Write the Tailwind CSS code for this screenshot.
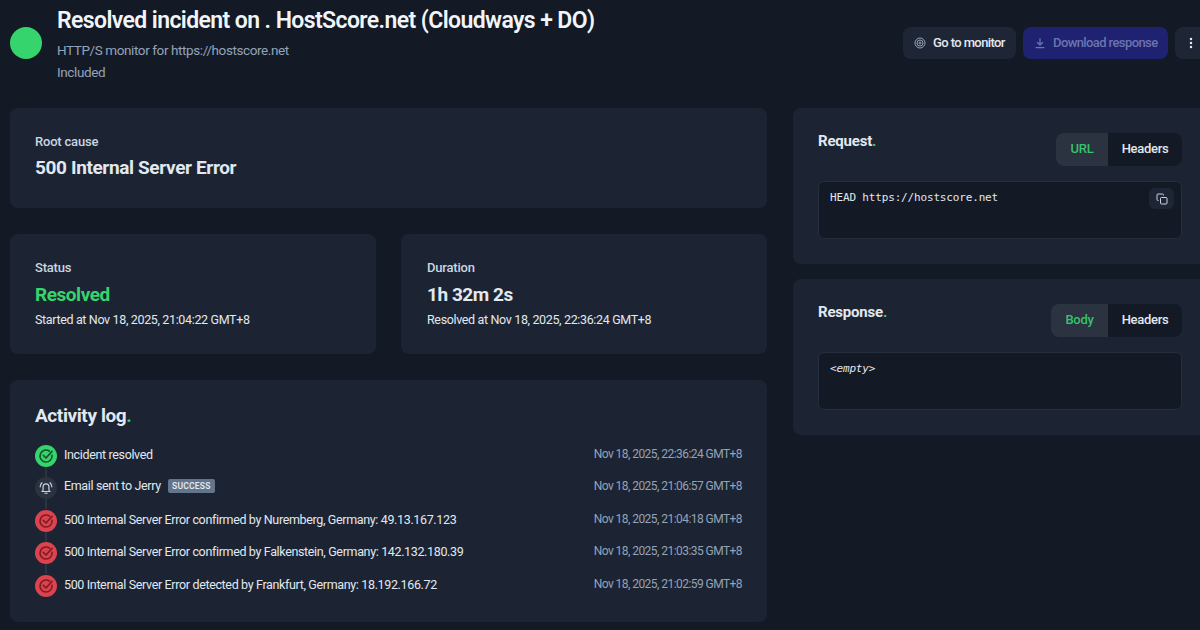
<!DOCTYPE html>
<html lang="en">
<head>
  <meta charset="UTF-8">
  <title>Resolved incident</title>
  <script src="https://cdn.jsdelivr.net/npm/@tailwindcss/browser@4"></script>
</head>
<body class="bg-[#131a26] text-[#e2e8f0] font-['Roboto',sans-serif] w-[1200px] h-[630px] overflow-hidden">
  <div class="w-[1207px] pl-[10px]">

    <!-- header -->
    <header class="h-[108px] flex items-start">
      <div class="w-8 h-8 rounded-full bg-[#36d46c] mt-[27px] shrink-0"></div>
      <div class="ml-[15px] flex-1">
        <h1 class="text-[23px] leading-[28px] mt-[7px] font-semibold tracking-[-0.6px] text-[#f1f5f9]">Resolved incident on . HostScore.net (Cloudways + DO)</h1>
        <p class="text-[13.5px] leading-[20px] mt-[5px] tracking-[-0.4px] text-[#94a3b8]">HTTP/S monitor for https://hostscore.net</p>
        <p class="text-[13.5px] leading-[20px] mt-[2px] tracking-[-0.4px] text-[#94a3b8]">Included</p>
      </div>
      <div class="flex gap-[7px] mt-[27px]">
        <button class="h-8 w-[113px] pl-[11px] rounded-lg bg-[#1e2534] flex items-center gap-[7px] text-[13px] font-medium tracking-[-0.6px] text-[#e2e8f0]">
          <svg class="w-3 h-3 text-[#94a3b8]" viewBox="0 0 24 24" fill="none" stroke="currentColor" stroke-width="2"><circle cx="12" cy="12" r="10"/><circle cx="12" cy="12" r="6"/><circle cx="12" cy="12" r="2"/></svg>
          Go to monitor
        </button>
        <button class="h-8 w-[145px] pl-[11px] rounded-lg bg-[#1e2270] flex items-center gap-[7px] text-[13px] font-medium tracking-[-0.6px] text-[#6b74b0]">
          <svg class="w-3 h-3" viewBox="0 0 24 24" fill="none" stroke="currentColor" stroke-width="2.5" stroke-linecap="round" stroke-linejoin="round"><path d="M12 3v12M7 11l5 5 5-5M4 21h16"/></svg>
          Download response
        </button>
        <button class="h-8 w-8 rounded-lg bg-[#1e2534] flex items-center justify-center text-[#e2e8f0]">
          <svg class="w-3 h-3" viewBox="0 0 24 24" fill="currentColor"><circle cx="12" cy="4" r="2.5"/><circle cx="12" cy="12" r="2.5"/><circle cx="12" cy="20" r="2.5"/></svg>
        </button>
      </div>
    </header>

    <div class="flex gap-[26px] items-start">
      <!-- left column -->
      <main class="w-[757px] shrink-0 flex flex-col gap-[26px]">
        <section class="h-[100px] rounded-lg bg-[#1c2433] px-[25px] pt-[25px]">
          <p class="text-[13px] leading-[18px] font-medium tracking-[-0.2px] text-[#cbd5e1]">Root cause</p>
          <p class="text-[19px] leading-[26px] mt-[4px] font-bold tracking-[-0.37px] text-[#e2e8f0]">500 Internal Server Error</p>
        </section>

        <div class="grid grid-cols-2 gap-[25px]">
          <section class="h-[120px] rounded-lg bg-[#1c2433] px-[25px] pt-[25px]">
            <p class="text-[13px] leading-[18px] font-medium tracking-[-0.2px] text-[#cbd5e1]">Status</p>
            <p class="text-[19px] leading-[26px] mt-[5px] font-bold tracking-[-0.45px] text-[#36d46c]">Resolved</p>
            <p class="text-[12.5px] leading-[18px] mt-[3px] tracking-[-0.35px] text-[#e2e8f0]">Started at Nov 18, 2025, 21:04:22 GMT+8</p>
          </section>
          <section class="h-[120px] rounded-lg bg-[#1c2433] pl-[26px] pr-[25px] pt-[25px]">
            <p class="text-[13px] leading-[18px] font-medium tracking-[-0.2px] text-[#cbd5e1]">Duration</p>
            <p class="text-[19px] leading-[26px] mt-[5px] font-bold tracking-[-0.45px] text-[#e2e8f0]">1h 32m 2s</p>
            <p class="text-[12.5px] leading-[18px] mt-[3px] tracking-[-0.35px] text-[#e2e8f0]">Resolved at Nov 18, 2025, 22:36:24 GMT+8</p>
          </section>
        </div>

        <section class="h-[242px] rounded-lg bg-[#1c2433] px-[25px] pt-[24px]">
          <h2 class="text-[19px] leading-[24px] font-bold tracking-[-0.4px] text-[#e2e8f0]">Activity log<span class="text-[#36d46c]">.</span></h2>
          <ul class="mt-[17px] flex flex-col text-[12.5px] leading-[18px] tracking-[-0.35px] text-[#e2e8f0]">
            <li class="h-[32px] flex items-start justify-between">
              <div class="flex items-start gap-[7px]">
                <span class="relative w-[22px] h-[22px] rounded-full bg-[#36d46c] flex items-center justify-center text-[#14532d]">
                  <svg class="w-4 h-4" viewBox="0 0 24 24" fill="none" stroke="currentColor" stroke-width="2.5" stroke-linecap="round" stroke-linejoin="round"><path d="M21 11a9 9 0 1 1-4-6.5"/><path d="M8 11l4 4 9-10"/></svg>
                  <span class="absolute top-full left-[10px] w-[2px] h-[10px] bg-[#2b3240]"></span>
                </span>
                <span class="pt-px">Incident resolved</span>
              </div>
              <span class="text-[#94a3b8] text-[12px] tracking-[-0.55px]">Nov 18, 2025, 22:36:24 GMT+8</span>
            </li>
            <li class="h-[33px] flex items-start justify-between">
              <div class="flex items-start gap-[7px]">
                <span class="relative w-[22px] h-[22px] rounded-full bg-[#2b3240] flex items-center justify-center text-[#cbd5e1]">
                  <svg class="w-[14px] h-[14px]" viewBox="0 0 24 24" fill="none" stroke="currentColor" stroke-width="2" stroke-linecap="round" stroke-linejoin="round"><path d="M7 10a5 5 0 0 1 10 0v5a3 3 0 0 0 2 3H5a3 3 0 0 0 2-3z"/><path d="M2 10c0-3 1-5 3-7M22 10c0-3-1-5-3-7M10 21h4"/></svg>
                  <span class="absolute top-full left-[10px] w-[2px] h-[10px] bg-[#2b3240]"></span>
                </span>
                <span>Email sent to Jerry</span>
                <span class="mt-[2px] h-[14px] w-[47px] text-center rounded-[2px] bg-[#64748b] text-[8.5px] font-semibold tracking-[0.2px] leading-[14px] text-[#e2e8f0]">SUCCESS</span>
              </div>
              <span class="text-[#94a3b8] text-[12px] tracking-[-0.55px]">Nov 18, 2025, 21:06:57 GMT+8</span>
            </li>
            <li class="h-[32px] flex items-start justify-between">
              <div class="flex items-start gap-[7px]">
                <span class="relative w-[22px] h-[22px] rounded-full bg-[#dc4250] flex items-center justify-center text-[#7f1d1d]">
                  <svg class="w-4 h-4" viewBox="0 0 24 24" fill="none" stroke="currentColor" stroke-width="2.5" stroke-linecap="round" stroke-linejoin="round"><path d="M21 11a9 9 0 1 1-4-6.5"/><path d="M8 11l4 4 9-10"/></svg>
                  <span class="absolute top-full left-[10px] w-[2px] h-[10px] bg-[#2b3240]"></span>
                </span>
                <span class="pt-px">500 Internal Server Error confirmed by Nuremberg, Germany: 49.13.167.123</span>
              </div>
              <span class="text-[#94a3b8] text-[12px] tracking-[-0.55px]">Nov 18, 2025, 21:04:18 GMT+8</span>
            </li>
            <li class="h-[33px] flex items-start justify-between">
              <div class="flex items-start gap-[7px]">
                <span class="relative w-[22px] h-[22px] rounded-full bg-[#dc4250] flex items-center justify-center text-[#7f1d1d]">
                  <svg class="w-4 h-4" viewBox="0 0 24 24" fill="none" stroke="currentColor" stroke-width="2.5" stroke-linecap="round" stroke-linejoin="round"><path d="M21 11a9 9 0 1 1-4-6.5"/><path d="M8 11l4 4 9-10"/></svg>
                  <span class="absolute top-full left-[10px] w-[2px] h-[10px] bg-[#2b3240]"></span>
                </span>
                <span class="pt-px">500 Internal Server Error confirmed by Falkenstein, Germany: 142.132.180.39</span>
              </div>
              <span class="text-[#94a3b8] text-[12px] tracking-[-0.55px]">Nov 18, 2025, 21:03:35 GMT+8</span>
            </li>
            <li class="h-[32px] flex items-start justify-between">
              <div class="flex items-start gap-[7px]">
                <span class="w-[22px] h-[22px] rounded-full bg-[#dc4250] flex items-center justify-center text-[#7f1d1d]">
                  <svg class="w-4 h-4" viewBox="0 0 24 24" fill="none" stroke="currentColor" stroke-width="2.5" stroke-linecap="round" stroke-linejoin="round"><path d="M21 11a9 9 0 1 1-4-6.5"/><path d="M8 11l4 4 9-10"/></svg>
                </span>
                <span class="pt-px">500 Internal Server Error detected by Frankfurt, Germany: 18.192.166.72</span>
              </div>
              <span class="text-[#94a3b8] text-[12px] tracking-[-0.55px]">Nov 18, 2025, 21:02:59 GMT+8</span>
            </li>
          </ul>
        </section>
      </main>

      <!-- right column -->
      <aside class="w-[414px] shrink-0 flex flex-col gap-[15px]">
        <section class="h-[156px] rounded-lg bg-[#1c2433] px-[25px] pt-[25px]">
          <div class="flex justify-between items-start">
            <h2 class="text-[15px] leading-[17px] font-bold tracking-[-0.2px] text-[#e2e8f0]">Request<span class="text-[#36d46c]">.</span></h2>
            <div class="flex h-[33px] rounded-lg overflow-hidden text-[13px] font-medium tracking-[-0.3px]">
              <span class="w-[52px] pb-[2px] bg-[#2b3240] text-[#36c26a] flex items-center justify-center">URL</span>
              <span class="w-[74px] pb-[2px] bg-[#131a26] text-[#e2e8f0] flex items-center justify-center">Headers</span>
            </div>
          </div>
          <div class="relative mt-[15px] h-[58px] rounded-md bg-[#131a26] border border-[#262e3e] px-[11px] py-[8px] font-['DejaVu_Sans_Mono',monospace] text-[11px] leading-[16px] tracking-[-0.16px] text-[#e2e8f0]">
            HEAD https://hostscore.net
            <span class="absolute top-[6px] right-[7px] w-[25px] h-[21px] rounded-md bg-[#1e2534] flex items-center justify-center text-[#cbd5e1]">
              <svg class="w-3 h-3" viewBox="0 0 24 24" fill="none" stroke="currentColor" stroke-width="2" stroke-linejoin="round"><rect x="9" y="9" width="13" height="13" rx="2"/><path d="M5 15H4a2 2 0 0 1-2-2V4a2 2 0 0 1 2-2h9a2 2 0 0 1 2 2v1"/></svg>
            </span>
          </div>
        </section>

        <section class="h-[156px] rounded-lg bg-[#1c2433] px-[25px] pt-[25px]">
          <div class="flex justify-between items-start">
            <h2 class="text-[15px] leading-[17px] font-bold tracking-[-0.2px] text-[#e2e8f0]">Response<span class="text-[#36d46c]">.</span></h2>
            <div class="flex h-[33px] rounded-lg overflow-hidden text-[13px] font-medium tracking-[-0.3px]">
              <span class="w-[57px] pb-[2px] bg-[#2b3240] text-[#36c26a] flex items-center justify-center">Body</span>
              <span class="w-[74px] pb-[2px] bg-[#131a26] text-[#e2e8f0] flex items-center justify-center">Headers</span>
            </div>
          </div>
          <div class="mt-[15px] h-[58px] rounded-md bg-[#131a26] border border-[#262e3e] px-[11px] py-[8px] font-['DejaVu_Sans_Mono',monospace] italic text-[11px] leading-[16px] tracking-[-0.16px] text-[#e2e8f0]">&lt;empty&gt;</div>
        </section>
      </aside>
    </div>
  </div>
</body>
</html>
